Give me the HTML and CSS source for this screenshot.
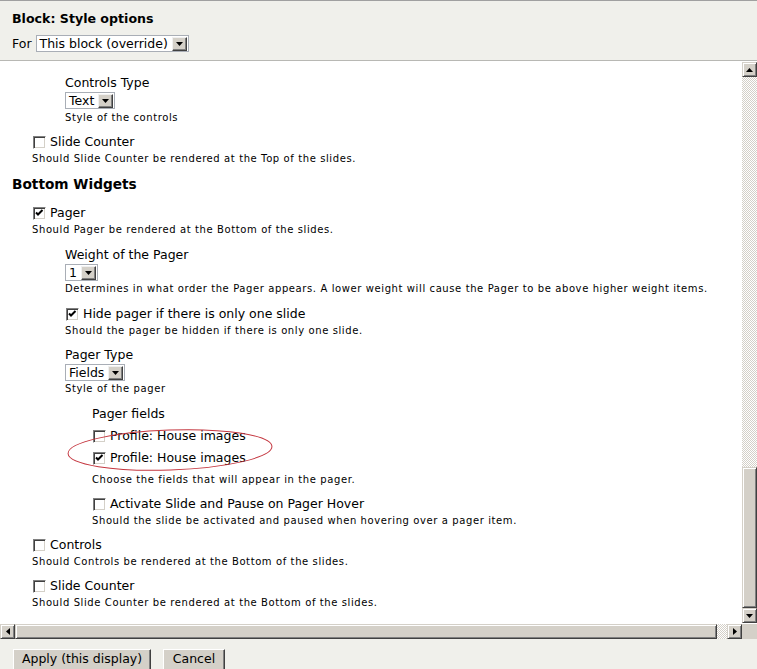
FILE: index.html
```html
<!DOCTYPE html>
<html>
<head>
<meta charset="utf-8">
<link rel="stylesheet" href="styles.css">
</head>
<body>
<div class="header">
  <h1 class="title">Block: Style options</h1>
  <div class="for-row">
    <span>For</span>
    <span class="select"><span class="sel-text">This block (override)</span><span class="sel-btn"><svg width="7" height="4" viewBox="0 0 7 4"><path d="M0 0h7L3.5 4z" fill="#000"/></svg></span></span>
  </div>
</div>

<div class="viewport">
  <div class="main">
    <div class="content">
      <div class="group">
        <div class="sub">
          <div class="item">
            <div class="label">Controls Type</div>
            <span class="select"><span class="sel-text">Text</span><span class="sel-btn"><svg width="7" height="4" viewBox="0 0 7 4"><path d="M0 0h7L3.5 4z" fill="#000"/></svg></span></span>
            <div class="desc">Style of the controls</div>
          </div>
        </div>
        <div class="item">
          <label class="cb"><span class="box"></span>Slide Counter</label>
          <div class="desc">Should Slide Counter be rendered at the Top of the slides.</div>
        </div>
      </div>

      <h2 class="section">Bottom Widgets</h2>

      <div class="group">
        <div class="item">
          <label class="cb"><span class="box"><svg width="11" height="11" viewBox="0 0 11 11"><path d="M2 4.5l2 2 4.5-4.5" fill="none" stroke="#000" stroke-width="2"/></svg></span>Pager</label>
          <div class="desc">Should Pager be rendered at the Bottom of the slides.</div>
        </div>
        <div class="sub sub-first">
          <div class="item">
            <div class="label">Weight of the Pager</div>
            <span class="select"><span class="sel-text">1</span><span class="sel-btn"><svg width="7" height="4" viewBox="0 0 7 4"><path d="M0 0h7L3.5 4z" fill="#000"/></svg></span></span>
            <div class="desc desc-tight">Determines in what order the Pager appears. A lower weight will cause the Pager to be above higher weight items.</div>
          </div>
          <div class="item">
            <label class="cb"><span class="box"><svg width="11" height="11" viewBox="0 0 11 11"><path d="M2 4.5l2 2 4.5-4.5" fill="none" stroke="#000" stroke-width="2"/></svg></span>Hide pager if there is only one slide</label>
            <div class="desc">Should the pager be hidden if there is only one slide.</div>
          </div>
          <div class="item">
            <div class="label">Pager Type</div>
            <span class="select"><span class="sel-text">Fields</span><span class="sel-btn"><svg width="7" height="4" viewBox="0 0 7 4"><path d="M0 0h7L3.5 4z" fill="#000"/></svg></span></span>
            <div class="desc desc-tight">Style of the pager</div>
          </div>
          <div class="sub2">
            <div class="item">
              <div class="label">Pager fields</div>
              <label class="cb cb-list"><span class="box"></span>Profile: House images</label>
              <label class="cb cb-list"><span class="box"><svg width="11" height="11" viewBox="0 0 11 11"><path d="M2 4.5l2 2 4.5-4.5" fill="none" stroke="#000" stroke-width="2"/></svg></span>Profile: House images</label>
              <div class="desc desc-list">Choose the fields that will appear in the pager.</div>
            </div>
            <div class="item">
              <label class="cb"><span class="box"></span>Activate Slide and Pause on Pager Hover</label>
              <div class="desc">Should the slide be activated and paused when hovering over a pager item.</div>
            </div>
          </div>
        </div>
        <div class="item">
          <label class="cb"><span class="box"></span>Controls</label>
          <div class="desc">Should Controls be rendered at the Bottom of the slides.</div>
        </div>
        <div class="item">
          <label class="cb"><span class="box"></span>Slide Counter</label>
          <div class="desc">Should Slide Counter be rendered at the Bottom of the slides.</div>
        </div>
      </div>

      <svg class="ellipse" width="212" height="48" viewBox="0 0 212 48"><ellipse cx="106" cy="24" rx="102" ry="20" transform="rotate(-2 106 24)" fill="none" stroke="#c4363f" stroke-width="1"/></svg>
    </div>

    <div class="vscroll">
      <div class="sb-btn"><svg width="7" height="4" viewBox="0 0 7 4"><path d="M3.5 0L7 4H0z" fill="#000"/></svg></div>
      <div class="track"></div>
      <div class="thumb"></div>
      <div class="sb-btn"><svg width="7" height="4" viewBox="0 0 7 4"><path d="M0 0h7L3.5 4z" fill="#000"/></svg></div>
    </div>
  </div>

  <div class="hscroll">
    <div class="sb-btn"><svg width="4" height="7" viewBox="0 0 4 7"><path d="M4 0v7L0 3.5z" fill="#000"/></svg></div>
    <div class="hthumb"></div>
    <div class="htrack"></div>
    <div class="sb-btn"><svg width="4" height="7" viewBox="0 0 4 7"><path d="M0 0v7L4 3.5z" fill="#000"/></svg></div>
    <div class="corner"></div>
  </div>
</div>

<div class="footer">
  <button class="btn btn-apply">Apply (this display)</button>
  <button class="btn btn-cancel">Cancel</button>
</div>
</body>
</html>
```

FILE: styles.css
```css
* { box-sizing: border-box; }

body {
  margin: 0;
  width: 757px;
  height: 669px;
  overflow: hidden;
  background: #f0f0eb;
  color: #000;
  font-family: "DejaVu Sans", Verdana, sans-serif;
  font-size: 12.5px;
}

.header {
  height: 61px;
  border-top: 1px solid #a0a0a0;
  border-bottom: 1px solid #b8b8b4;
  padding: 10px 12px 0;
}

.title {
  margin: 0;
  font-size: 12.6px;
  font-weight: bold;
  line-height: 16px;
}

.for-row {
  display: flex;
  align-items: center;
  gap: 4px;
  margin-top: 8px;
  line-height: 16px;
}

.select {
  display: inline-flex;
  align-items: center;
  height: 17px;
  border: 1px solid #a9aeb6;
  background: #fff;
  padding-left: 3px;
  padding-right: 1px;
  vertical-align: top;
}

.sel-text {
  line-height: 15px;
  white-space: nowrap;
}

.sel-btn {
  display: flex;
  align-items: center;
  justify-content: center;
  width: 15px;
  height: 14px;
  margin-left: 4px;
  background: #d4d0c8;
  border: 1px solid;
  border-color: #f0f0f0 #404040 #404040 #f0f0f0;
  box-shadow: inset -1px -1px #808080;
}

.viewport {
  height: 578px;
}

.main {
  display: flex;
  height: 562px;
  background: #fff;
}

.content {
  flex: 1;
  position: relative;
  overflow: hidden;
  padding: 14px 0 0 12px;
}

.group {
  margin-left: 20px;
}

.sub {
  margin-left: 33px;
}

.sub-first {
  margin-top: 11px;
}

.sub2 {
  margin-left: 27px;
}

.item {
  margin-bottom: 10px;
}

.label {
  height: 16px;
  line-height: 16px;
  white-space: nowrap;
}

.item > .select {
  margin-top: 1px;
}

.desc {
  margin-top: 2px;
  font-size: 10px;
  letter-spacing: 0.6px;
  line-height: 13px;
  white-space: nowrap;
}

.desc-tight {
  margin-top: 1px;
  margin-bottom: 11px;
}

.desc-list {
  margin-top: 7px;
}

.section {
  margin: 10px 0 12px;
  font-size: 13.7px;
  font-weight: bold;
  line-height: 18px;
}

.cb {
  display: flex;
  align-items: center;
  gap: 4px;
  height: 16px;
  line-height: 16px;
  white-space: nowrap;
}

.cb-list {
  margin-top: 6px;
}

.box {
  display: flex;
  align-items: center;
  justify-content: center;
  width: 13px;
  height: 13px;
  margin-left: 1px;
  background: #fff;
  border: 1px solid;
  border-color: #808080 #ffffff #ffffff #808080;
  box-shadow: inset 1px 1px #404040, inset -1px -1px #d4d0c8;
}

.ellipse {
  position: absolute;
  left: 64px;
  top: 365px;
}

.vscroll {
  width: 15px;
  display: flex;
  flex-direction: column;
  background: #fff;
}

.sb-btn {
  display: flex;
  align-items: center;
  justify-content: center;
  width: 15px;
  height: 15px;
  flex: none;
  background: #d4d0c8;
  border: 1px solid;
  border-color: #d4d0c8 #404040 #404040 #d4d0c8;
  box-shadow: inset 1px 1px #fff, inset -1px -1px #808080;
}

.vscroll .sb-btn:first-child {
  margin-top: 1px;
}

.track, .htrack {
  background-color: #fff;
  background-image: repeating-conic-gradient(#d4d0c8 0 25%, #fff 0 50%);
  background-size: 2px 2px;
}

.track {
  flex: 1;
}

.thumb {
  height: 141px;
  flex: none;
  background: #d4d0c8;
  border: 1px solid;
  border-color: #d4d0c8 #404040 #404040 #d4d0c8;
  box-shadow: inset 1px 1px #fff, inset -1px -1px #808080;
}

.hscroll {
  display: flex;
  height: 16px;
  background: #d4d0c8;
  border-top: 1px solid #fff;
}

.hscroll .sb-btn {
  height: 15px;
}

.hthumb {
  flex: 1;
  background: #d4d0c8;
  border: 1px solid;
  border-color: #d4d0c8 #404040 #404040 #d4d0c8;
  box-shadow: inset 1px 1px #fff, inset -1px -1px #808080;
}

.htrack {
  width: 10px;
}

.corner {
  width: 15px;
  background: #d4d0c8;
}

.footer {
  display: flex;
  gap: 12px;
  padding: 10px 0 0 13px;
}

.btn {
  height: 22px;
  padding: 0 0 2px;
  background: #d4d0c8;
  color: #000;
  font-family: "DejaVu Sans", Verdana, sans-serif;
  font-size: 12.5px;
  line-height: 18px;
  text-align: center;
  border: 1px solid;
  border-color: #fff #404040 #404040 #fff;
  box-shadow: inset -1px -1px #808080;
  align-self: flex-start;
}

.btn-apply { width: 138px; }
.btn-cancel { width: 62px; }
```
